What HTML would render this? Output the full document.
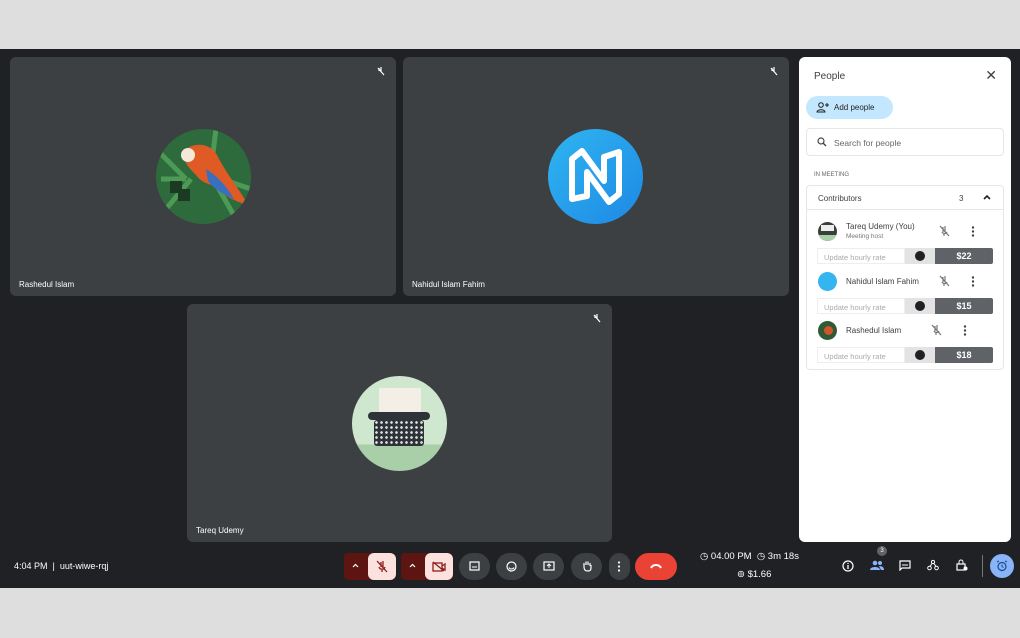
<!DOCTYPE html>
<html><head><style>
*{box-sizing:border-box;margin:0;padding:0}
body{width:1020px;height:638px;background:#dedede;font-family:"Liberation Sans",sans-serif;position:relative;overflow:hidden}
.main{position:absolute;left:0;top:49px;width:1020px;height:539px;background:#202124}
.tile{position:absolute;background:#3c4043;border-radius:6px}
.name{position:absolute;left:9px;bottom:7px;color:#fff;font-size:8px}
.mic{position:absolute;right:10px;top:9px;width:10px;height:10px}
.av{position:absolute;width:95px;height:95px;border-radius:50%;overflow:hidden}
.panel{position:absolute;left:799px;top:57px;width:212px;height:485px;background:#fff;border-radius:6px;color:#3c4043}
.btn{position:absolute;top:553px;height:27px;border-radius:14px;background:#3c4043}
.t{position:absolute;color:#fff;font-size:9px}
.rate{position:absolute;left:817px;width:176px;height:16px;font-size:7.5px;color:#aaa}
.rate .i{position:absolute;left:0;top:0;width:88px;height:16px;border:1px solid #eee;padding:4px 6px}
.rate .c{position:absolute;left:88px;top:0;width:30px;height:16px;background:#e3e3e3}
.rate .c:after{content:"";position:absolute;left:10px;top:3px;width:10px;height:10px;border-radius:50%;background:#202124}
.rate .p{position:absolute;left:118px;top:0;width:58px;height:16px;background:#5f6368;color:#fff;font-weight:bold;font-size:9px;text-align:center;line-height:16px;border-radius:0 2px 2px 0}
.pn{position:absolute;font-size:8px;color:#3c4043}
svg.ic{position:absolute}
</style></head><body>
<div class="main"></div>
<div class="tile" style="left:10px;top:57px;width:386px;height:239px"><div class="name">Rashedul Islam</div><svg class="mic" viewBox="0 0 10 10"><path d="M3 2v3M5 1v5M2 2l6 7" stroke="#fff" stroke-width="1.2"/></svg></div>
<div class="tile" style="left:403px;top:57px;width:386px;height:239px"><div class="name">Nahidul Islam Fahim</div><svg class="mic" viewBox="0 0 10 10"><path d="M3 2v3M5 1v5M2 2l6 7" stroke="#fff" stroke-width="1.2"/></svg></div>
<div class="tile" style="left:187px;top:304px;width:425px;height:238px"><div class="name">Tareq Udemy</div><svg class="mic" viewBox="0 0 10 10"><path d="M3 2v3M5 1v5M2 2l6 7" stroke="#fff" stroke-width="1.2"/></svg></div>
<div class="av" style="left:156px;top:129px;background:#2e6b3c"><svg width="95" height="95" viewBox="0 0 95 95"><path d="M0 20l30 30M10 80l25-30M60 0l-5 40M95 60l-30-10M80 90L60 55M5 50h25" stroke="#4c9a55" stroke-width="5"/><path d="M28 22c10-10 28-8 34 6 8 16 20 30 30 48-14-4-26-10-34-20-6 0-14-4-18-10-6-6-14-14-12-24z" fill="#e05a25"/><path d="M50 40c10 6 20 16 28 30-10-4-20-10-26-18z" fill="#3a6fc0"/><circle cx="32" cy="26" r="7" fill="#f4e8d8"/><path d="M14 52h12v8h8v12H22v-8h-8z" fill="#1c3a22"/></svg></div>
<div class="av" style="left:548px;top:129px;background:linear-gradient(135deg,#2fb6f0,#1e88e5)"><svg width="95" height="95" viewBox="0 0 95 95"><path d="M24 70V30l10-8 22 30V28l15-5v42l-10 8-22-30v24z" fill="none" stroke="#fff" stroke-width="6" stroke-linejoin="round"/></svg></div>
<div class="av" style="left:352px;top:376px;background:linear-gradient(#cfe6cf 0 72%,#a9cfa9 72%)"><div style="position:absolute;left:27px;top:12px;width:42px;height:26px;background:#f3efe6"></div><div style="position:absolute;left:16px;top:36px;width:62px;height:8px;background:#2d3338;border-radius:4px"></div><div style="position:absolute;left:22px;top:44px;width:50px;height:26px;background:#2d3338;border-radius:3px;background-image:radial-gradient(circle,#ddd 1.2px,transparent 1.5px);background-size:5px 5px"></div></div>
<div class="panel">
<div style="position:absolute;left:15px;top:14px;font-size:10px">People</div>
<div style="position:absolute;right:14px;top:10px;font-size:14px">✕</div>
<div style="position:absolute;left:7px;top:39px;width:87px;height:23px;border-radius:12px;background:#c2e7ff;font-size:8px;color:#1f1f1f;padding:7px 0 0 28px">Add people<svg style="position:absolute;left:10px;top:6px" width="13" height="11" viewBox="0 0 13 11"><circle cx="5" cy="3" r="2.3" fill="none" stroke="#1f1f1f"/><path d="M1 10c0-3 8-3 8 0z" fill="none" stroke="#1f1f1f"/><path d="M11 1v4M9 3h4" stroke="#1f1f1f"/></svg></div>
<div style="position:absolute;left:7px;top:71px;width:198px;height:28px;border:1px solid #e6e6e6;border-radius:4px;font-size:8.5px;color:#666;padding:9px 0 0 27px">Search for people<svg style="position:absolute;left:10px;top:8px" width="10" height="10" viewBox="0 0 10 10"><circle cx="4" cy="4" r="3" fill="none" stroke="#444" stroke-width="1.2"/><path d="M6 6l3 3" stroke="#444" stroke-width="1.4"/></svg></div>
<div style="position:absolute;left:15px;top:115px;font-size:6px;color:#666">IN MEETING</div>
<div style="position:absolute;left:7px;top:128px;width:198px;height:185px;border:1px solid #e6e6e6;border-radius:4px"></div>
<div style="position:absolute;left:7px;top:152px;width:198px;height:1px;background:#e6e6e6"></div>
<div class="pn" style="left:19px;top:137px">Contributors</div>
<div class="pn" style="left:160px;top:137px">3</div>
<svg class="ic" style="left:184px;top:137px" width="8" height="6" viewBox="0 0 8 6"><path d="M1 5l3-3 3 3" fill="none" stroke="#222" stroke-width="1.6"/></svg>
</div>
<div style="position:absolute;left:818px;top:222px;width:19px;height:19px;border-radius:50%;background:#384038;overflow:hidden"><div style="position:absolute;left:3px;top:3px;width:13px;height:6px;background:#eee"></div><div style="position:absolute;left:0;top:13px;width:19px;height:6px;background:#a9cfa9"></div></div>
<div class="pn" style="left:846px;top:222px">Tareq Udemy (You)</div>
<div class="pn" style="left:846px;top:233px;font-size:6.5px;color:#777">Meeting host</div>
<div style="position:absolute;left:818px;top:272px;width:19px;height:19px;border-radius:50%;background:#35b5f0"></div>
<div class="pn" style="left:846px;top:277px">Nahidul Islam Fahim</div>
<div style="position:absolute;left:818px;top:321px;width:19px;height:19px;border-radius:50%;background:#2e5a36"><div style="position:absolute;left:6px;top:5px;width:9px;height:9px;border-radius:50%;background:#d2542b"></div></div>
<div class="pn" style="left:846px;top:326px">Rashedul Islam</div>
<svg class="ic" style="left:939px;top:225px" width="11" height="12" viewBox="0 0 11 12"><path d="M4 2v5M6 1v6M1 1l9 10M3 7c1 2 4 2 5 0M5 9v2" stroke="#777" fill="none" stroke-width="1.2"/></svg>
<svg class="ic" style="left:939px;top:275px" width="11" height="12" viewBox="0 0 11 12"><path d="M4 2v5M6 1v6M1 1l9 10M3 7c1 2 4 2 5 0M5 9v2" stroke="#777" fill="none" stroke-width="1.2"/></svg>
<svg class="ic" style="left:931px;top:324px" width="11" height="12" viewBox="0 0 11 12"><path d="M4 2v5M6 1v6M1 1l9 10M3 7c1 2 4 2 5 0M5 9v2" stroke="#777" fill="none" stroke-width="1.2"/></svg>
<svg class="ic" style="left:971px;top:226px" width="4" height="11" viewBox="0 0 4 11"><circle cx="2" cy="1.5" r="1.2" fill="#444"/><circle cx="2" cy="5.5" r="1.2" fill="#444"/><circle cx="2" cy="9.5" r="1.2" fill="#444"/></svg>
<svg class="ic" style="left:971px;top:276px" width="4" height="11" viewBox="0 0 4 11"><circle cx="2" cy="1.5" r="1.2" fill="#444"/><circle cx="2" cy="5.5" r="1.2" fill="#444"/><circle cx="2" cy="9.5" r="1.2" fill="#444"/></svg>
<svg class="ic" style="left:963px;top:325px" width="4" height="11" viewBox="0 0 4 11"><circle cx="2" cy="1.5" r="1.2" fill="#444"/><circle cx="2" cy="5.5" r="1.2" fill="#444"/><circle cx="2" cy="9.5" r="1.2" fill="#444"/></svg>
<div class="rate" style="top:248px"><div class="i">Update hourly rate</div><div class="c"></div><div class="p">$22</div></div>
<div class="rate" style="top:298px"><div class="i">Update hourly rate</div><div class="c"></div><div class="p">$15</div></div>
<div class="rate" style="top:347px"><div class="i">Update hourly rate</div><div class="c"></div><div class="p">$18</div></div>

<div class="t" style="left:14px;top:561px">4:04 PM &nbsp;|&nbsp; uut-wiwe-rqj</div>
<div class="btn" style="left:344px;width:52px;background:#5c1510;border-radius:4px"></div>
<div class="btn" style="left:368px;width:28px;background:#fbe2df;border-radius:6px"></div>
<svg class="ic" style="left:352px;top:563px" width="7" height="5" viewBox="0 0 7 5"><path d="M1 4l2.5-2.5L6 4" fill="none" stroke="#fff" stroke-width="1.2"/></svg>
<svg class="ic" style="left:376px;top:560px" width="12" height="13" viewBox="0 0 12 13"><path d="M5 2v5M7 1v6M1 1l10 11M3 7c1 3 5 3 6 0M6 10v2" stroke="#8c1d18" fill="none" stroke-width="1.3"/></svg>
<div class="btn" style="left:401px;width:52px;background:#5c1510;border-radius:4px"></div>
<div class="btn" style="left:425px;width:28px;background:#fbe2df;border-radius:6px"></div>
<svg class="ic" style="left:409px;top:563px" width="7" height="5" viewBox="0 0 7 5"><path d="M1 4l2.5-2.5L6 4" fill="none" stroke="#fff" stroke-width="1.2"/></svg>
<svg class="ic" style="left:432px;top:561px" width="14" height="11" viewBox="0 0 14 11"><rect x="1" y="2" width="9" height="8" fill="none" stroke="#8c1d18" stroke-width="1.3"/><path d="M10 5l3-2v6l-3-2M1 1l11 9" stroke="#8c1d18" fill="none" stroke-width="1.3"/></svg>
<div class="btn" style="left:459px;width:31px"></div><svg class="ic" style="left:469px;top:561px" width="11" height="10" viewBox="0 0 11 10"><rect x="1" y="1" width="9" height="8" fill="none" stroke="#fff" stroke-width="1.2"/><path d="M3 6h5" stroke="#fff"/></svg>
<div class="btn" style="left:496px;width:31px"></div><svg class="ic" style="left:506px;top:561px" width="11" height="11" viewBox="0 0 11 11"><circle cx="5.5" cy="5.5" r="4.5" fill="none" stroke="#fff" stroke-width="1.2"/><path d="M3 6.5c1 2 4 2 5 0" fill="none" stroke="#fff"/></svg>
<div class="btn" style="left:533px;width:31px"></div><svg class="ic" style="left:543px;top:561px" width="12" height="10" viewBox="0 0 12 10"><rect x="1" y="1" width="10" height="8" fill="none" stroke="#fff" stroke-width="1.2"/><path d="M6 7V3M4 5l2-2 2 2" stroke="#fff" fill="none"/></svg>
<div class="btn" style="left:571px;width:31px"></div><svg class="ic" style="left:582px;top:560px" width="10" height="12" viewBox="0 0 10 12"><path d="M2 6V3M4 5V1.5M6 5V1.5M8 6V3M2 6c0 4 1 5 4 5s3-2 3-4V5" fill="none" stroke="#fff" stroke-width="1.2"/></svg>
<div class="btn" style="left:609px;width:21px"></div><svg class="ic" style="left:617px;top:561px" width="4" height="11" viewBox="0 0 4 11"><circle cx="2" cy="1.5" r="1.1" fill="#fff"/><circle cx="2" cy="5.5" r="1.1" fill="#fff"/><circle cx="2" cy="9.5" r="1.1" fill="#fff"/></svg>
<div class="btn" style="left:635px;width:42px;background:#ea4335"></div><svg class="ic" style="left:650px;top:563px" width="12" height="6" viewBox="0 0 12 6"><path d="M1 5c2-4 8-4 10 0" fill="none" stroke="#fff" stroke-width="2"/></svg>
<div class="t" style="left:700px;top:551px;font-size:9.5px">◷ 04.00 PM &nbsp;◷ 3m 18s</div>
<div class="t" style="left:737px;top:569px;font-size:9.5px">⊚ $1.66</div>
<svg class="ic" style="left:842px;top:560px" width="12" height="12" viewBox="0 0 12 12"><circle cx="6" cy="6" r="5" fill="none" stroke="#fff" stroke-width="1.2"/><path d="M6 5v4M6 3v1" stroke="#fff" stroke-width="1.3"/></svg>
<div style="position:absolute;left:877px;top:546px;width:10px;height:10px;border-radius:50%;background:#5f6368;color:#fff;font-size:6px;text-align:center;line-height:10px">3</div>
<svg class="ic" style="left:870px;top:560px" width="14" height="11" viewBox="0 0 14 11"><circle cx="5" cy="3" r="2.3" fill="#8ab4f8"/><circle cx="10" cy="3" r="2" fill="#8ab4f8"/><path d="M0 10c0-4 10-4 10 0zM9 6c3 0 5 1 5 4h-3" fill="#8ab4f8"/></svg>
<svg class="ic" style="left:899px;top:560px" width="12" height="11" viewBox="0 0 12 11"><path d="M1 1h10v7H3l-2 2z" fill="none" stroke="#fff" stroke-width="1.2"/><path d="M3 5h6" stroke="#fff"/></svg>
<svg class="ic" style="left:927px;top:559px" width="12" height="12" viewBox="0 0 12 12"><circle cx="6" cy="3" r="1.6" fill="none" stroke="#fff"/><circle cx="2.5" cy="9" r="1.8" fill="none" stroke="#fff"/><circle cx="9.5" cy="9" r="1.8" fill="none" stroke="#fff"/><path d="M5 4.5L3 7.5M7 4.5l2 3" stroke="#fff"/></svg>
<svg class="ic" style="left:956px;top:559px" width="12" height="12" viewBox="0 0 12 12"><rect x="1" y="5" width="8" height="6" fill="none" stroke="#fff" stroke-width="1.2"/><path d="M3 5V3a2 2 0 014 0v2" fill="none" stroke="#fff"/><circle cx="9.5" cy="9.5" r="2" fill="#fff"/></svg>
<div style="position:absolute;left:982px;top:555px;width:1px;height:22px;background:#777"></div>
<div style="position:absolute;left:990px;top:554px;width:24px;height:24px;border-radius:50%;background:#8ab4f8"><svg style="position:absolute;left:6px;top:6px" width="12" height="12" viewBox="0 0 12 12"><circle cx="6" cy="6.5" r="4" fill="none" stroke="#1a4b8c" stroke-width="1.2"/><path d="M6 4.5v2l1.5 1M1 2l2-1M11 2l-2-1" stroke="#1a4b8c" fill="none"/></svg></div>
</body></html>
